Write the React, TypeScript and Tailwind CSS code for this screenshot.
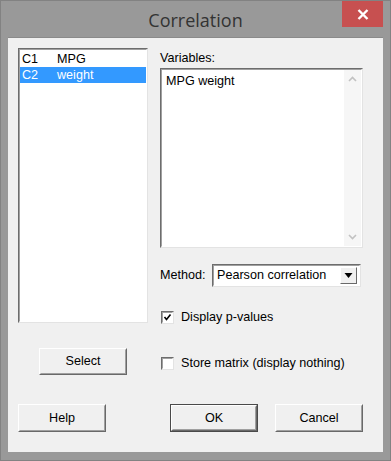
import React, { useState } from 'react';

const font = { fontFamily: '"Liberation Sans", Arial, sans-serif' };

const Sunken: React.FC<{ className?: string; children?: React.ReactNode }> = ({ className = '', children }) => (
  <div className={`border border-t-[#6d6d6d] border-l-[#6d6d6d] border-r-[#e3e3e3] border-b-[#e3e3e3] ${className}`}>
    <div className="w-full h-full border border-t-[#a0a0a0] border-l-[#a0a0a0] border-r-white border-b-white bg-white relative">
      {children}
    </div>
  </div>
);

const Button: React.FC<{ label: string; isDefault?: boolean; className?: string }> = ({ label, isDefault, className = '' }) => (
  <button
    className={`${isDefault ? 'border border-[#4a4a4a]' : ''} ${className} bg-[#f0f0f0] p-0`}
  >
    <div className="w-full h-full border border-t-white border-l-white border-r-[#696969] border-b-[#696969]">
      <div className="w-full h-full border border-t-[#f0f0f0] border-l-[#f0f0f0] border-r-[#a0a0a0] border-b-[#a0a0a0] flex items-center justify-center text-[12.6px] text-black">
        {label}
      </div>
    </div>
  </button>
);

const Checkbox: React.FC<{ checked: boolean; label: string; onToggle: () => void }> = ({ checked, label, onToggle }) => (
  <div className="flex items-center cursor-default" onClick={onToggle}>
    <div className="w-[13px] h-[13px] border border-t-[#6d6d6d] border-l-[#6d6d6d] border-r-[#e3e3e3] border-b-[#e3e3e3]">
      <div className="w-full h-full border border-t-[#a0a0a0] border-l-[#a0a0a0] border-r-white border-b-white bg-white flex items-center justify-center">
        {checked && (
          <svg width="9" height="9" viewBox="0 0 9 9">
            <path d="M1.5 4 L3.5 6.5 L7.5 1.5" fill="none" stroke="#000" strokeWidth="1.6" />
          </svg>
        )}
      </div>
    </div>
    <span className="ml-[7px] text-[12.6px] text-black">{label}</span>
  </div>
);

export default function App() {
  const [pvals, setPvals] = useState(true);
  const [store, setStore] = useState(false);
  const cols = [
    { id: 'C1', name: 'MPG' },
    { id: 'C2', name: 'weight' },
  ];
  const selected = 1;

  return (
    <div className="w-[391px] h-[461px] bg-[#999999] border border-[#828282] flex flex-col" style={font}>
      {/* title bar */}
      <div className="relative h-[36px] shrink-0">
        <div className="text-center pt-[6px] text-[18px] text-[#333333]" style={{ fontFamily: '"Open Sans", "Noto Sans", sans-serif' }}>
          Correlation
        </div>
        <div className="absolute top-0 right-[7px] w-[41px] h-[26px] bg-[#c75050] flex items-center justify-center">
          <svg width="12" height="11" viewBox="0 0 12 11">
            <path d="M1.5 1 L10.5 10 M10.5 1 L1.5 10" stroke="#fff" strokeWidth="2.4" />
          </svg>
        </div>
      </div>

      {/* client area */}
      <div className="mx-[7px] h-[415px] bg-[#f0f0f0] border-t border-[#8a8a8a] pl-[10px] pt-[10px]">
        <div className="flex">
          {/* left column */}
          <div className="w-[130px] flex flex-col">
            <Sunken className="h-[275px]">
              <div className="pt-[1px] text-[12.6px] leading-[16px]">
                {cols.map((c, i) => (
                  <div
                    key={c.id}
                    className={`flex px-[2px] ${i === selected ? 'bg-[#3399ff] text-white' : 'text-black'}`}
                  >
                    <span className="w-[35px]">{c.id}</span>
                    <span>{c.name}</span>
                  </div>
                ))}
              </div>
            </Sunken>
            <Button label="Select" className="mt-[25px] ml-[21px] w-[88px] h-[27px]" />
          </div>

          {/* right column */}
          <div className="ml-[12px] w-[203px] flex flex-col">
            <div className="mt-[3px] text-[12.6px] leading-[14px] text-black">Variables:</div>
            <Sunken className="mt-[3px] h-[180px]">
              <div className="px-[4px] pt-[2px] text-[12.6px] text-black">MPG weight</div>
              <div className="absolute top-0 right-0 bottom-0 w-[17px] bg-[#f6f6f6] flex flex-col items-center justify-between py-[6px]">
                <svg width="9" height="6" viewBox="0 0 9 6">
                  <path d="M1 5 L4.5 1.5 L8 5" fill="none" stroke="#c2c2c2" strokeWidth="1.6" />
                </svg>
                <svg width="9" height="6" viewBox="0 0 9 6">
                  <path d="M1 1 L4.5 4.5 L8 1" fill="none" stroke="#c2c2c2" strokeWidth="1.6" />
                </svg>
              </div>
            </Sunken>

            <div className="mt-[16px] flex items-center">
              <span className="text-[12.6px] text-black w-[52px]">Method:</span>
              <Sunken className="w-[149px] h-[23px]">
                <div className="flex items-center h-full">
                  <span className="pl-[3px] text-[12.6px] text-black flex-1">Pearson correlation</span>
                  <div className="w-[17px] h-[17px] mr-[2px] bg-[#f0f0f0] border border-t-white border-l-white border-r-[#696969] border-b-[#696969] flex items-center justify-center">
                    <svg width="9" height="5" viewBox="0 0 9 5">
                      <path d="M0.5 0 L8.5 0 L4.5 5 Z" fill="#000" />
                    </svg>
                  </div>
                </div>
              </Sunken>
            </div>

            <div className="mt-[21px] ml-[1px]">
              <Checkbox checked={pvals} label="Display p-values" onToggle={() => setPvals(!pvals)} />
            </div>
            <div className="mt-[27px] ml-[1px]">
              <Checkbox checked={store} label="Store matrix (display nothing)" onToggle={() => setStore(!store)} />
            </div>
          </div>
        </div>

        {/* bottom buttons */}
        <div className="flex mt-[29px]">
          <Button label="Help" className="w-[88px] h-[28px]" />
          <Button label="OK" isDefault className="ml-[64px] w-[88px] h-[28px]" />
          <Button label="Cancel" className="ml-[17px] w-[88px] h-[28px]" />
        </div>
      </div>
    </div>
  );
}
